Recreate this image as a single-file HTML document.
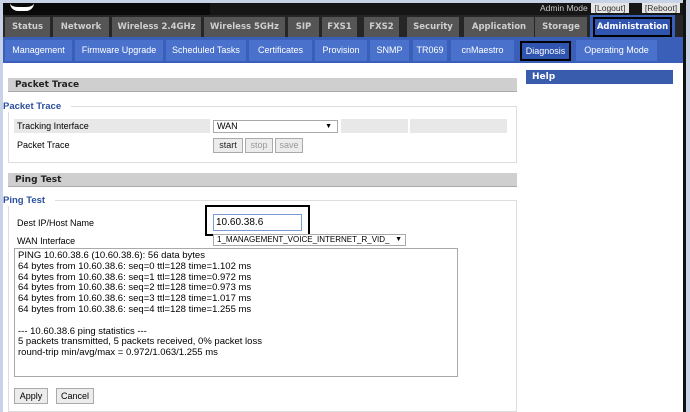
<!DOCTYPE html>
<html><head><style>
*{margin:0;padding:0;box-sizing:border-box}
body{width:690px;height:412px;overflow:hidden;background:#c9d3e8;font-family:"Liberation Sans",sans-serif;position:relative;font-size:9px}
.a{position:absolute}
.t{position:absolute;top:17px;height:20px;background:#555;color:#cfcfcf;font-weight:bold;text-align:center;line-height:20px;font-family:"DejaVu Sans",sans-serif;font-size:8.5px}
.s{position:absolute;top:40px;height:21px;background:#4a72cc;color:#fff;font-size:9px;text-align:center;line-height:21px}
.hd{position:absolute;left:8px;width:509px;height:14px;background:#cfcfcf;border-bottom:1px solid #aaa;font-weight:bold;line-height:14px;padding-left:7px;color:#222;font-family:"DejaVu Sans",sans-serif;font-size:9px}
.lg{position:absolute;left:3px;color:#2a4f9e;font-weight:bold;font-size:9.5px;background:#fff;padding-right:10px}
.fs{position:absolute;left:8px;width:509px;border:1px solid #ddd}
.btn{position:absolute;height:15px;border:1px solid #aaa;background:#ececec;font-size:9px;line-height:13px;text-align:center}
</style></head><body>
<div class="a" style="left:3px;top:3px;width:683px;height:12px;background:#0a0a0a"></div>
<div class="a" style="left:210px;top:3px;width:476px;height:12px;background:#161616"></div>
<div class="a" style="left:10px;top:3px;width:24px;height:8px;border-bottom:4px solid #fff;border-radius:0 0 12px 12px"></div>
<div class="a" style="left:540px;top:3px;color:#ccc;font-size:8.5px">Admin Mode</div>
<div class="a" style="left:591px;top:3px;width:38px;height:10px;background:#e6e6e6;color:#333;font-size:8.5px;line-height:10px;text-align:center">[Logout]</div>
<div class="a" style="left:642px;top:3px;width:38px;height:10px;background:#e6e6e6;color:#333;font-size:8.5px;line-height:10px;text-align:center">[Reboot]</div>
<div class="a" style="left:3px;top:15px;width:683px;height:24px;background:#262626"></div>
<div class="t" style="left:5px;width:45px">Status</div>
<div class="t" style="left:53px;width:56px">Network</div>
<div class="t" style="left:112px;width:89px">Wireless 2.4GHz</div>
<div class="t" style="left:204px;width:81px">Wireless 5GHz</div>
<div class="t" style="left:288px;width:31px">SIP</div>
<div class="t" style="left:322px;width:35px">FXS1</div>
<div class="t" style="left:364px;width:35px">FXS2</div>
<div class="t" style="left:407px;width:52px">Security</div>
<div class="t" style="left:464px;width:70px">Application</div>
<div class="t" style="left:535px;width:52px">Storage</div>
<div class="a" style="left:590px;top:15px;width:85px;height:24px;background:#3a5fb8"></div>
<div class="t" style="left:593px;top:17px;width:79px;background:#2f55b0;color:#fff;border:2px solid #000;line-height:16px">Administration</div>
<div class="a" style="left:3px;top:37px;width:680px;height:26px;background:#3a5fb8"></div>
<div class="s" style="left:5px;width:67px">Management</div>
<div class="s" style="left:75px;width:88px">Firmware Upgrade</div>
<div class="s" style="left:166px;width:80px">Scheduled Tasks</div>
<div class="s" style="left:249px;width:63px">Certificates</div>
<div class="s" style="left:315px;width:52px">Provision</div>
<div class="s" style="left:370px;width:39px">SNMP</div>
<div class="s" style="left:413px;width:34px">TR069</div>
<div class="s" style="left:451px;width:63px">cnMaestro</div>
<div class="s" style="left:520px;top:41px;width:51px;height:20px;background:#2f55b0;border:2px solid #000;line-height:16px">Diagnosis</div>
<div class="s" style="left:576px;width:81px">Operating Mode</div>
<div class="a" style="left:3px;top:63px;width:680px;height:349px;background:#fff"></div>
<div class="a" style="left:683px;top:0;width:3px;height:412px;background:#111"></div>
<div class="a" style="left:526px;top:70px;width:147px;height:14px;background:#3a5cad;color:#fff;font-weight:bold;font-size:9px;line-height:14px;padding-left:6px;font-family:'DejaVu Sans',sans-serif">Help</div>

<div class="hd" style="top:78px">Packet Trace</div>
<div class="fs" style="top:106px;height:57px"></div>
<div class="lg" style="top:101px">Packet Trace</div>
<div class="a" style="left:14px;top:119px;width:196px;height:14px;background:#e8e8e8;padding-left:3px;line-height:14px">Tracking Interface</div>
<div class="a" style="left:213px;top:120px;width:125px;height:13px;background:#fff;border:1px solid #aaa;padding-left:3px;line-height:11px">WAN<span style="position:absolute;right:5px;font-size:7px">▼</span></div>
<div class="a" style="left:341px;top:119px;width:67px;height:14px;background:#e8e8e8"></div>
<div class="a" style="left:410px;top:119px;width:97px;height:14px;background:#e8e8e8"></div>
<div class="a" style="left:17px;top:140px">Packet Trace</div>
<div class="btn" style="left:213px;top:138px;width:30px;color:#222">start</div>
<div class="btn" style="left:245px;top:138px;width:28px;color:#999">stop</div>
<div class="btn" style="left:275px;top:138px;width:28px;color:#999">save</div>

<div class="hd" style="top:173px">Ping Test</div>
<div class="fs" style="top:200px;height:212px"></div>
<div class="lg" style="top:195px">Ping Test</div>
<div class="a" style="left:17px;top:218px">Dest IP/Host Name</div>
<div class="a" style="left:205px;top:205px;width:105px;height:31px;border:2px solid #000"></div>
<div class="a" style="left:213px;top:214px;width:89px;height:17px;border:1px solid #7a9cd3;background:#fff;font-size:10px;padding-left:2px;line-height:15px">10.60.38.6</div>
<div class="a" style="left:17px;top:236px">WAN Interface</div>
<div class="a" style="left:213px;top:234px;width:193px;height:12px;border:1px solid #aaa;background:#fff;font-size:8px;line-height:10px;padding-left:3px;overflow:hidden;white-space:nowrap">1_MANAGEMENT_VOICE_INTERNET_R_VID_<span style="position:absolute;right:3px;top:0;font-size:7px;background:#fff;padding-left:2px">▼</span></div>
<div class="a" style="left:14px;top:248px;width:444px;height:129px;border:1px solid #aaa;background:#fff;padding:2px 3px;font-size:9.5px;line-height:10.8px;white-space:pre">PING 10.60.38.6 (10.60.38.6): 56 data bytes
64 bytes from 10.60.38.6: seq=0 ttl=128 time=1.102 ms
64 bytes from 10.60.38.6: seq=1 ttl=128 time=0.972 ms
64 bytes from 10.60.38.6: seq=2 ttl=128 time=0.973 ms
64 bytes from 10.60.38.6: seq=3 ttl=128 time=1.017 ms
64 bytes from 10.60.38.6: seq=4 ttl=128 time=1.255 ms

--- 10.60.38.6 ping statistics ---
5 packets transmitted, 5 packets received, 0% packet loss
round-trip min/avg/max = 0.972/1.063/1.255 ms</div>
<div class="btn" style="left:14px;top:388px;width:34px;height:16px;line-height:14px">Apply</div>
<div class="btn" style="left:56px;top:388px;width:38px;height:16px;line-height:14px">Cancel</div>
</body></html>
